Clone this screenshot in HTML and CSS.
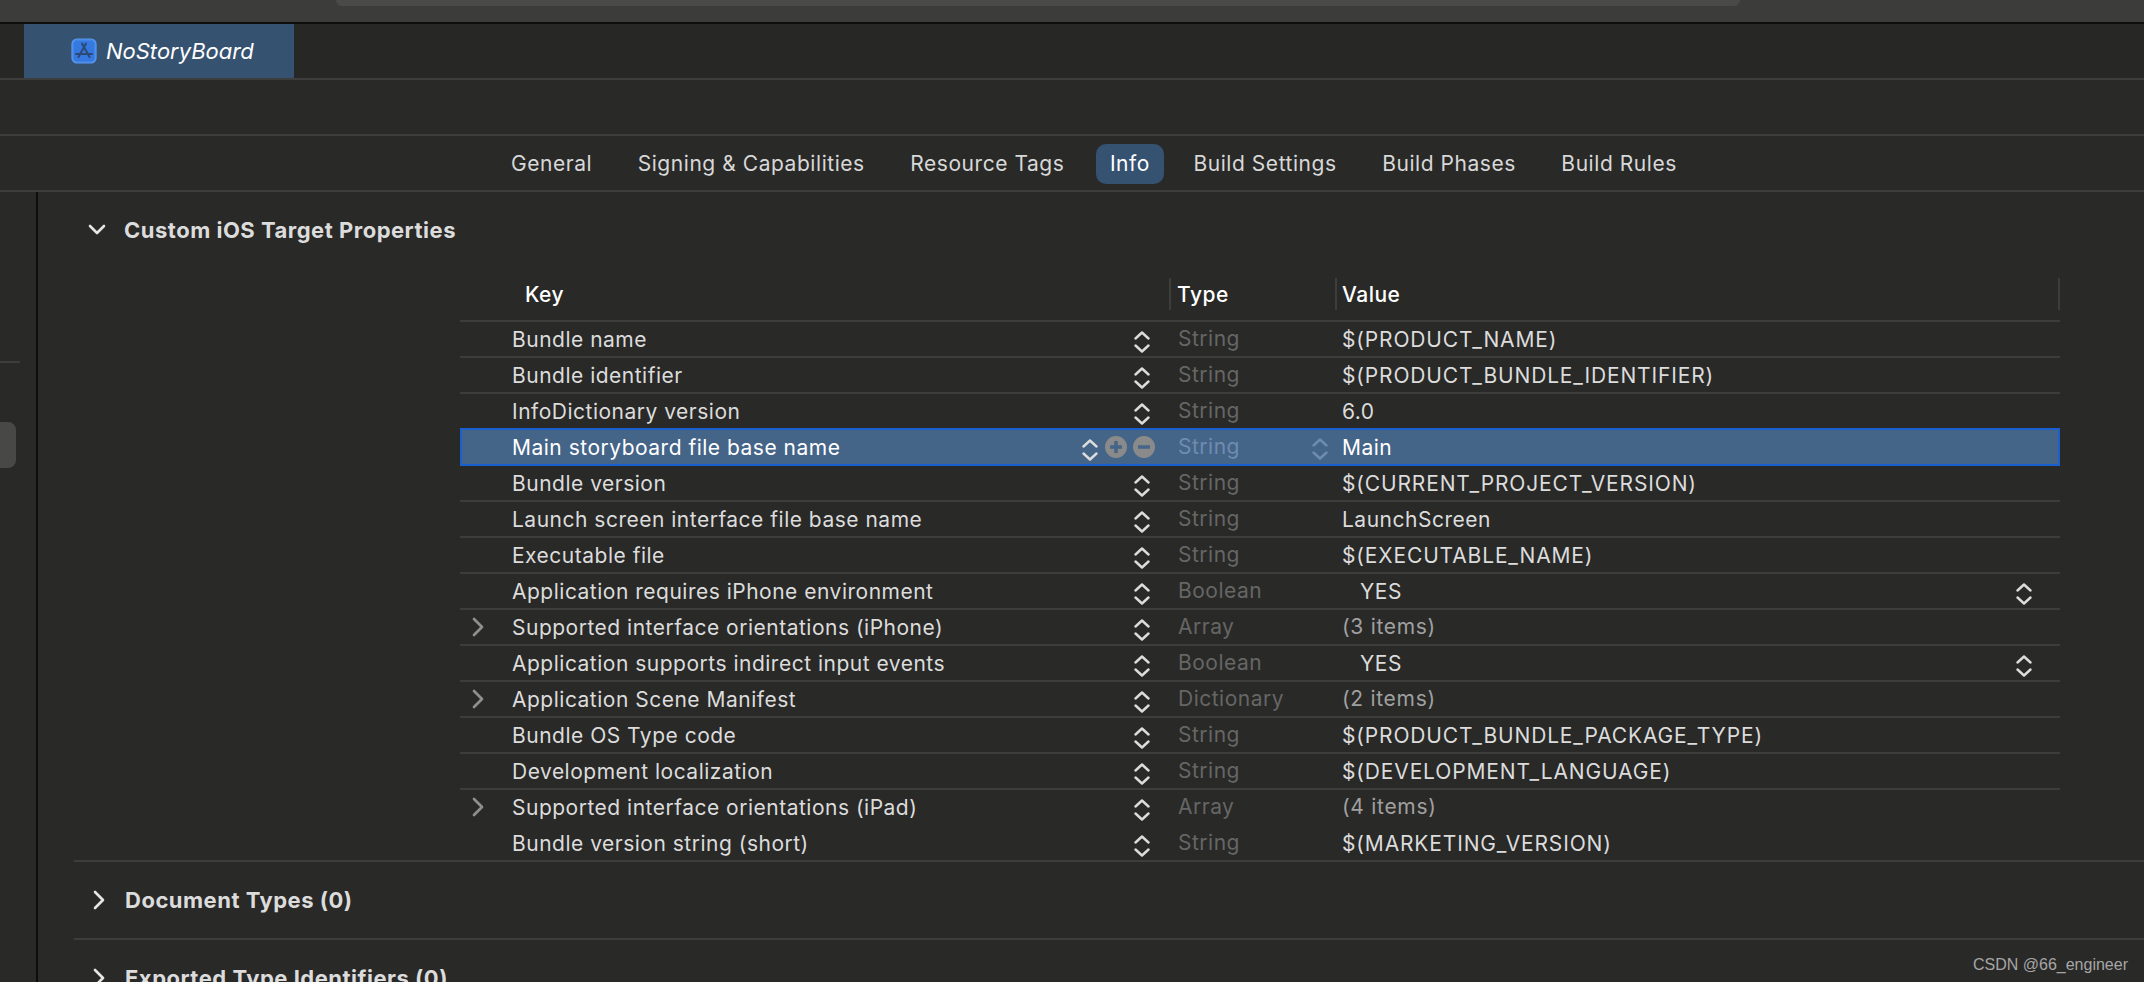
FILE: index.html
```html
<!DOCTYPE html>
<html lang="en">
<head>
<meta charset="utf-8">
<title>NoStoryBoard</title>
<link rel="stylesheet" href="styles.css">
</head>
<body>
<svg class="defs" width="0" height="0" aria-hidden="true">
  <symbol id="stepper" viewBox="0 0 16 22"><path d="M1.5 7.5 8 1.5l6.5 6M1.5 14.5l6.5 6 6.5-6" fill="none" stroke="currentColor" stroke-width="2.4" stroke-linecap="round" stroke-linejoin="round"/></symbol>
  <symbol id="disclosure" viewBox="0 0 12 20"><path d="M2 2l8 8-8 8" fill="none" stroke="currentColor" stroke-width="2.7" stroke-linecap="round" stroke-linejoin="round"/></symbol>
</svg>
<div class="app">
  <header class="titlebar"><div class="search-pill"></div></header>
  <div class="filetabs">
    <div class="filetab">
      <svg class="appicon" viewBox="0 0 26 26">
        <rect x="1" y="1" width="24" height="24" rx="5" fill="#3f84e6" stroke="#5a9af0" stroke-width="1.2"/>
        <rect x="3" y="3" width="20" height="20" rx="3.500" fill="#3478e0"/>
        <path d="M11 5.500l7.500 13.500M15 5.500L7.500 19M5 16h16" fill="none" stroke="#2c4a75" stroke-width="2" stroke-linecap="round"/>
      </svg>
      <span class="filetab-name">NoStoryBoard</span>
    </div>
  </div>
  <div class="emptybar"></div>
  <nav class="tabs">
    <span class="tab">General</span>
    <span class="tab">Signing &amp; Capabilities</span>
    <span class="tab">Resource Tags</span>
    <span class="tab active">Info</span>
    <span class="tab">Build Settings</span>
    <span class="tab">Build Phases</span>
    <span class="tab">Build Rules</span>
  </nav>
  <div class="body">
    <aside class="side">
      <div class="side-line"></div>
      <div class="side-sel"></div>
    </aside>
    <main class="content">
      <section class="section">
        <div class="heading">
          <svg class="chev-down" viewBox="0 0 18 12"><path d="M2 2l7 7 7-7" fill="none" stroke="currentColor" stroke-width="2.6" stroke-linecap="round" stroke-linejoin="round"/></svg>
          <h2>Custom iOS Target Properties</h2>
        </div>
        <div class="table">
          <div class="thead">
            <div class="th th-key">Key</div>
            <div class="th th-type">Type</div>
            <div class="th th-value">Value</div>
          </div>
          <div class="row"><div class="key"><span class="name">Bundle name</span><svg class="stepper"><use href="#stepper"/></svg></div><div class="type">String</div><div class="value caps">$(PRODUCT_NAME)</div></div>
          <div class="row"><div class="key"><span class="name">Bundle identifier</span><svg class="stepper"><use href="#stepper"/></svg></div><div class="type">String</div><div class="value caps">$(PRODUCT_BUNDLE_IDENTIFIER)</div></div>
          <div class="row"><div class="key"><span class="name">InfoDictionary version</span><svg class="stepper"><use href="#stepper"/></svg></div><div class="type">String</div><div class="value">6.0</div></div>
          <div class="row selected">
            <div class="key"><span class="name">Main storyboard file base name</span><svg class="stepper"><use href="#stepper"/></svg>
              <svg class="round" viewBox="0 0 22 22"><circle cx="11" cy="11" r="11" fill="#8a8a8a"/><path d="M11 5v12M5 11h12" stroke="#446488" stroke-width="3.500"/></svg>
              <svg class="round" viewBox="0 0 22 22"><circle cx="11" cy="11" r="11" fill="#8a8a8a"/><path d="M5 11h12" stroke="#446488" stroke-width="3.500"/></svg>
            </div>
            <div class="type">String<svg class="stepper faint"><use href="#stepper"/></svg></div>
            <div class="value">Main</div>
          </div>
          <div class="row after-selected"><div class="key"><span class="name">Bundle version</span><svg class="stepper"><use href="#stepper"/></svg></div><div class="type">String</div><div class="value caps">$(CURRENT_PROJECT_VERSION)</div></div>
          <div class="row"><div class="key"><span class="name">Launch screen interface file base name</span><svg class="stepper"><use href="#stepper"/></svg></div><div class="type">String</div><div class="value">LaunchScreen</div></div>
          <div class="row"><div class="key"><span class="name">Executable file</span><svg class="stepper"><use href="#stepper"/></svg></div><div class="type">String</div><div class="value caps">$(EXECUTABLE_NAME)</div></div>
          <div class="row"><div class="key"><span class="name">Application requires iPhone environment</span><svg class="stepper"><use href="#stepper"/></svg></div><div class="type">Boolean</div><div class="value bool"><span>YES</span><svg class="stepper"><use href="#stepper"/></svg></div></div>
          <div class="row"><div class="key"><svg class="disclosure"><use href="#disclosure"/></svg><span class="name">Supported interface orientations (iPhone)</span><svg class="stepper"><use href="#stepper"/></svg></div><div class="type">Array</div><div class="value dim">(3 items)</div></div>
          <div class="row"><div class="key"><span class="name">Application supports indirect input events</span><svg class="stepper"><use href="#stepper"/></svg></div><div class="type">Boolean</div><div class="value bool"><span>YES</span><svg class="stepper"><use href="#stepper"/></svg></div></div>
          <div class="row"><div class="key"><svg class="disclosure"><use href="#disclosure"/></svg><span class="name">Application Scene Manifest</span><svg class="stepper"><use href="#stepper"/></svg></div><div class="type">Dictionary</div><div class="value dim">(2 items)</div></div>
          <div class="row"><div class="key"><span class="name">Bundle OS Type code</span><svg class="stepper"><use href="#stepper"/></svg></div><div class="type">String</div><div class="value caps">$(PRODUCT_BUNDLE_PACKAGE_TYPE)</div></div>
          <div class="row"><div class="key"><span class="name">Development localization</span><svg class="stepper"><use href="#stepper"/></svg></div><div class="type">String</div><div class="value caps">$(DEVELOPMENT_LANGUAGE)</div></div>
          <div class="row"><div class="key"><svg class="disclosure"><use href="#disclosure"/></svg><span class="name">Supported interface orientations (iPad)</span><svg class="stepper"><use href="#stepper"/></svg></div><div class="type">Array</div><div class="value dim">(4 items)</div></div>
          <div class="row no-line"><div class="key"><span class="name">Bundle version string (short)</span><svg class="stepper"><use href="#stepper"/></svg></div><div class="type">String</div><div class="value caps">$(MARKETING_VERSION)</div></div>
        </div>
      </section>
      <section class="section">
        <div class="heading">
          <svg class="chev-right" viewBox="0 0 12 20"><path d="M2 2l8 8-8 8" fill="none" stroke="currentColor" stroke-width="2.6" stroke-linecap="round" stroke-linejoin="round"/></svg>
          <h2>Document Types (0)</h2>
        </div>
      </section>
      <section class="section">
        <div class="heading">
          <svg class="chev-right" viewBox="0 0 12 20"><path d="M2 2l8 8-8 8" fill="none" stroke="currentColor" stroke-width="2.6" stroke-linecap="round" stroke-linejoin="round"/></svg>
          <h2>Exported Type Identifiers (0)</h2>
        </div>
      </section>
    </main>
  </div>
  <div class="watermark">CSDN @66_engineer</div>
</div>
</body>
</html>
```

FILE: styles.css
```css
* { box-sizing: border-box; }
html, body { margin: 0; padding: 0; height: 100%; overflow: hidden; }
body { background: #292928; color: #dcdcdc; font-family: Inter, "Noto Sans", sans-serif; font-size: 21px; letter-spacing: 0.5px; }
.defs { position: absolute; }
.app { position: relative; height: 982px; overflow: hidden; }

.titlebar { height: 24px; background: #3c3c3b; border-bottom: 2px solid #0d0d0d; padding-left: 336px; }
.search-pill { width: 1404px; height: 6px; background: #4a4a49; border-radius: 0 0 8px 8px; }

.filetabs { height: 56px; padding-left: 24px; background: #272726; border-bottom: 2px solid #3d3d3c; }
.filetab { width: 270px; height: 54px; background: #365271; display: flex; align-items: center; padding-left: 47px; gap: 9px; }
.appicon { width: 26px; height: 26px; flex: none; }
.filetab-name { color: #fff; font-style: italic; font-size: 22px; letter-spacing: 0; }

.emptybar { height: 56px; border-bottom: 2px solid #3d3d3c; }

.tabs { height: 56px; padding-top: 1px; border-bottom: 2px solid #3d3d3c; display: flex; align-items: center; padding-left: 511px; gap: 45.5px; color: #d8d8d8; line-height: 24px; letter-spacing: 0.55px; }
.tab.active { background: #365271; color: #fff; border-radius: 10px; padding: 8px 14px; margin: 0 -16px 0 -14px; }

.body { display: flex; height: 790px; }
.side { width: 38px; flex: none; border-right: 2px solid #0d0d0d; padding-top: 169px; }
.side-line { width: 20px; height: 2px; background: #3d3d3c; }
.side-sel { width: 16px; height: 46px; margin-top: 59px; background: #484847; border-radius: 0 8px 8px 0; }

.content { flex: 1; min-width: 0; padding-left: 36px; }
.section { border-bottom: 2px solid #3d3d3c; }
.section:last-child { border-bottom: 0; }
.heading { height: 76px; display: flex; align-items: center; padding-left: 14px; color: #e6e6e6; }
.heading h2 { margin: 0; font-size: 22px; font-weight: 700; color: #dcdcdc; }
.chev-down { width: 18px; height: 12px; margin-right: 18px; }
.chev-right { width: 12px; height: 20px; margin: 0 20px 0 5px; }

.table { margin-left: 386px; width: 1600px; }
.thead { height: 52px; display: flex; align-items: center; font-weight: 500; color: #fff; }
.th { height: 32px; display: flex; align-items: center; }
.th-key { width: 709px; padding-left: 65px; }
.th-type { width: 166px; padding-left: 6px; border-left: 2px solid #3d3d3c; }
.th-value { flex: 1; padding-left: 5px; border-left: 2px solid #3d3d3c; border-right: 2px solid #3d3d3c; }

.row { height: 36px; border-top: 2px solid #3d3d3c; display: flex; align-items: center; }
.row.no-line { border-top-color: transparent; }
.row.selected { position: relative; z-index: 1; background: #446488; border-top-color: #1a5fd0; box-shadow: 0 2px 0 #1a5fd0, inset 2px 0 #1a5fd0, inset -2px 0 #1a5fd0; color: #fff; }

.key { width: 710px; height: 100%; flex: none; display: flex; align-items: center; padding-left: 52px; padding-right: 20px; }
.name { flex: 1; min-width: 0; }
.disclosure { width: 12px; height: 20px; margin-left: -40px; margin-right: 28px; color: #8f8f8f; flex: none; }
.stepper { width: 16px; height: 22px; flex: none; margin-top: 5px; color: #dcdcdc; }
.round { width: 22px; height: 22px; flex: none; margin-left: 6px; }
.selected .key { padding-right: 15px; }
.selected .key .stepper { margin-right: 1px; }

.type { width: 166px; flex: none; height: 100%; display: flex; align-items: center; justify-content: space-between; padding: 0 8px 2px; color: #666665; }
.selected .type { color: #6f8cb0; }
.stepper.faint { color: #6f8cb0; }

.value { flex: 1; min-width: 0; padding-left: 6px; height: 100%; display: flex; align-items: center; }
.value.caps { letter-spacing: 0.85px; }
.value.dim { color: #a0a0a0; letter-spacing: 0.7px; padding-bottom: 2px; }
.value.bool { justify-content: space-between; padding-left: 24px; padding-right: 28px; }

.watermark { position: absolute; right: 16px; bottom: 8px; font-family: "Liberation Sans", sans-serif; font-size: 16px; letter-spacing: 0; color: #a6a6a6; }
```
